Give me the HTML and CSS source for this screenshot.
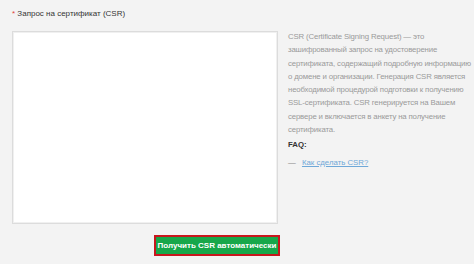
FILE: index.html
```html
<!DOCTYPE html>
<html lang="ru">
<head>
    <meta charset="UTF-8">
    <meta name="viewport" content="width=device-width, initial-scale=1.0">
    <title>CSR</title>
    <link rel="stylesheet" href="styles.css">
</head>
<body>
    <div class="form">
        <div class="left">
            <label class="label"><span class="req">*</span> Запрос на сертификат (CSR)</label>
            <textarea class="csr"></textarea>
            <div class="actions">
                <button class="btn">Получить CSR автоматически</button>
            </div>
        </div>

        <div class="info">
            <p class="text">CSR (Certificate Signing Request) — это<br>
                зашифрованный запрос на удостоверение<br>
                сертификата, содержащий подробную информацию<br>
                о домене и организации. Генерация CSR является<br>
                необходимой процедурой подготовки к получению<br>
                SSL-сертификата. CSR генерируется на Вашем<br>
                сервере и включается в анкету на получение<br>
                сертификата.</p>
            <p class="faq">FAQ:</p>
            <p class="link-row">— <a href="#">Как сделать CSR?</a></p>
        </div>
    </div>
</body>
</html>
```

FILE: styles.css
```css
body{
    margin: 0;
    background-color: #f3f3f3;
    font-family: "Liberation Sans", Arial, sans-serif;
    color: #333;
    overflow: hidden;
}

.form{
    display: flex;
    gap: 8px;
    padding: 9px 0 0 12px;
}

.left{
    width: 268px;
    flex-shrink: 0;
    display: flex;
    flex-direction: column;
}

.label{
    font-size: 8px;
    height: 22px;
    line-height: 10px;
}

.req{
    color: #e0403a;
}

.csr{
    width: 266px;
    height: 193px;
    box-sizing: border-box;
    border: 1px solid #dcdcdc;
    box-shadow: inset 0 0 0 1px #f0f0f0;
    background-color: white;
    margin: 0;
    resize: none;
}

.actions{
    display: flex;
    justify-content: flex-end;
    margin-top: 11px;
}

.btn{
    width: 126px;
    height: 21px;
    padding: 0;
    background-color: #17a74a;
    border: 2px solid #c8161d;
    color: white;
    font-family: "Liberation Sans", Arial, sans-serif;
    font-size: 8px;
    font-weight: bold;
    white-space: nowrap;
}

.info{
    flex: 1;
    padding-top: 21px;
    font-size: 7.8px;
    line-height: 13.3px;
    white-space: nowrap;
    letter-spacing: -0.15px;
}

.text{
    margin: 0;
    color: #9a9a9a;
}

.faq{
    margin: 2px 0 0;
    font-weight: bold;
    color: #333;
    letter-spacing: 0;
}

.link-row{
    margin: 4px 0 0;
    color: #888;
    letter-spacing: 0;
}

.link-row a{
    color: #6fa8d8;
    margin-left: 4px;
}
```
